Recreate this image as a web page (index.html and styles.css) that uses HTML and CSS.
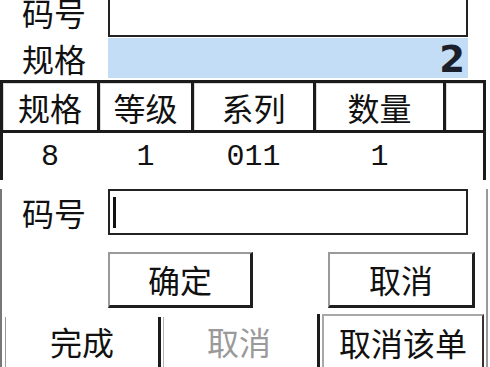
FILE: index.html
```html
<!DOCTYPE html>
<html lang="zh-CN">
<head>
  <meta charset="UTF-8">
  <meta name="viewport" content="width=device-width, initial-scale=1.0">
  <title>码号录入</title>
  <link rel="stylesheet" href="styles.css">
</head>
<body>
  <div class="screen">
    <!-- top fields -->
    <div class="row row-code">
      <span class="label">码号</span>
      <div class="box"></div>
    </div>
    <div class="row row-spec">
      <span class="label">规格</span>
      <div class="box box-blue"><span class="count">2</span></div>
    </div>

    <!-- grid -->
    <div class="grid">
      <div class="grid-head">
        <div class="cell c1">规格</div>
        <div class="cell c2">等级</div>
        <div class="cell c3">系列</div>
        <div class="cell c4">数量</div>
        <div class="cell c5"></div>
      </div>
      <div class="grid-row">
        <div class="cell c1">8</div>
        <div class="cell c2">1</div>
        <div class="cell c3">011</div>
        <div class="cell c4">1</div>
        <div class="cell c5"></div>
      </div>
    </div>

    <!-- input area -->
    <div class="form">
      <div class="row row-input">
        <span class="label">码号</span>
        <div class="box"><span class="caret"></span></div>
      </div>
      <div class="buttons">
        <button class="btn">确定</button>
        <button class="btn">取消</button>
      </div>
      <div class="tabs">
        <div class="tab tab-first">完成</div>
        <div class="tab tab-off">取消</div>
        <div class="tab tab-last"><span class="tab-box">取消该单</span></div>
      </div>
    </div>
  </div>
</body>
</html>
```
FILE: styles.css
```css
/* Basic styling */
* {
  box-sizing: border-box;
}
body {
  margin: 0;
  padding: 0;
  background: #fff;
  color: #111;
  font-family: "Noto Sans CJK SC", "DejaVu Sans", sans-serif;
  font-size: 32px;
  line-height: 1;
}
.screen {
  width: 490px;
  height: 367px;
  overflow: hidden;
}
.row {
  display: flex;
  align-items: center;
}
.label {
  width: 108px;
  padding-left: 22px;
}
.box {
  width: 360px;
  height: 100%;
  border: 2px solid #222;
}
.row-code {
  height: 50px;
  margin-top: -13px;
}
.row-spec {
  height: 40px;
  margin-top: 1px;
  margin-bottom: 2px;
}
.box-blue {
  border: none;
  background: #c3ddf6;
  display: flex;
  align-items: flex-end;
  justify-content: flex-end;
  padding: 0 3px 0 0;
}
.count {
  font-family: "DejaVu Sans", sans-serif;
  font-weight: bold;
  font-size: 37px;
  color: #1a1f2b;
  margin-bottom: 0;
}

/* grid */
.grid {
  width: 486px;
}
.grid-head,
.grid-row {
  display: flex;
  border-left: 3px solid #1b1b1b;
  border-right: 3px solid #1b1b1b;
}
.grid-head {
  height: 53px;
  border-top: 3px solid #1b1b1b;
  border-bottom: 3px solid #1b1b1b;
}
.grid-row {
  height: 47px;
  font-family: "Liberation Mono", monospace;
  font-size: 30px;
}
.cell {
  display: flex;
  align-items: center;
  justify-content: center;
}
.grid-head .cell {
  border-right: 3px solid #1b1b1b;
  box-shadow: inset 1px 1px 0 #d8d8d8;
}
.grid-head .c5 {
  border-right: none;
}
.grid-row .cell {
  border-right: 3px solid transparent;
}
.grid-row .c5 {
  border-right: none;
}
.c1 { width: 97px; }
.c2 { width: 94px; }
.c3 { width: 122px; }
.c4 { width: 130px; }
.c5 { width: 37px; }

/* input area */
.form {
  width: 488px;
  height: 187px;
  border-left: 2px solid #777;
  border-right: 2px solid #999;
}
.row-input {
  height: 46px;
  margin-top: 9px;
}
.row-input .label {
  padding-left: 20px;
  width: 106px;
}
.row-input .box {
  display: flex;
  align-items: center;
  padding-left: 3px;
}
.caret {
  width: 3px;
  height: 31px;
  background: #111;
}
.buttons {
  display: flex;
  margin-top: 17px;
  padding-left: 106px;
}
.btn {
  font-family: inherit;
  font-size: 32px;
  color: #111;
  background: #fff;
  width: 145px;
  height: 56px;
  padding: 0 0 2px 0;
  border-top: 2px solid #9a9a9a;
  border-left: 2px solid #9a9a9a;
  border-right: 3px solid #1e1e1e;
  border-bottom: 3px solid #1e1e1e;
}
.btn + .btn {
  margin-left: 75px;
  width: 147px;
}
.tabs {
  display: flex;
  margin-top: 6px;
  padding-left: 3px;
  height: 60px;
}
.tab {
  display: flex;
  justify-content: center;
  padding-top: 8px;
  margin-top: 3px;
}
.tab-first {
  width: 153px;
  border-left: 1px solid #9a9a9a;
}
.tab-off {
  width: 159px;
  color: #9a9a9a;
  border-left: 3px solid #1b1b1b;
  box-shadow: inset 2px 0 0 #fff, inset 3px 0 0 #b5b5b5;
}
.tab-last {
  margin-top: 0;
  padding-top: 0;
  border-left: 3px solid #1b1b1b;
  padding-left: 2px;
}
.tab-box {
  display: block;
  width: 162px;
  height: 60px;
  padding-top: 10px;
  text-align: center;
  border-top: 2px solid #a8a8a8;
  border-left: 2px solid #a8a8a8;
  border-right: 2px solid #333;
}
```
